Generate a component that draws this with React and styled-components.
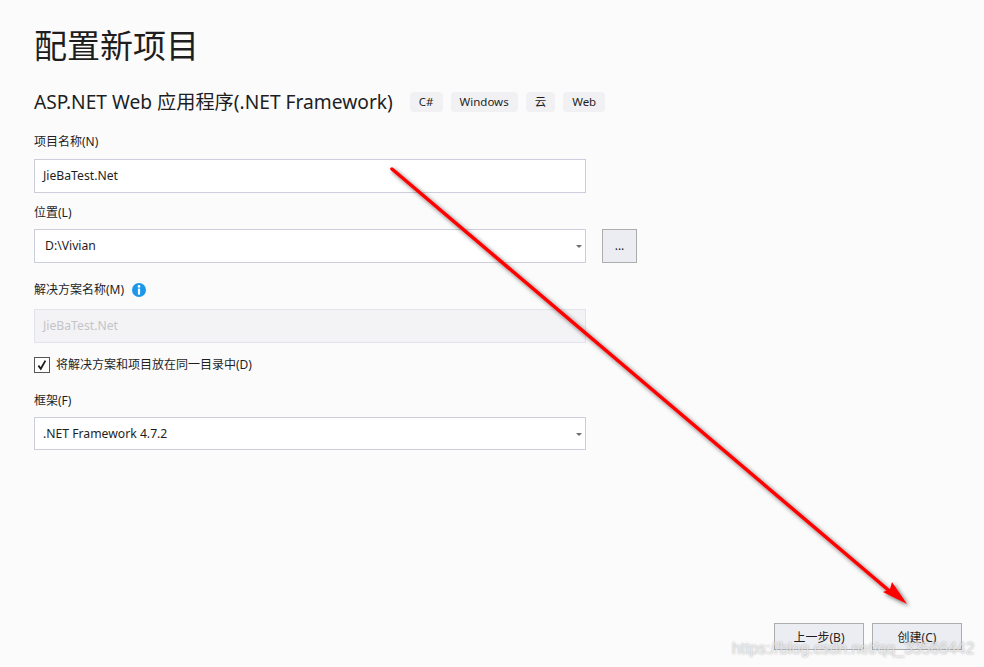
import React from "react";
import styled, { createGlobalStyle } from "styled-components";

const FONT = `"Noto Sans", "Noto Sans CJK SC", sans-serif`;

const Global = createGlobalStyle`
  html, body { margin: 0; padding: 0; background: #fbfbfc; }
  * { box-sizing: border-box; }
`;

const Page = styled.div`
  position: relative;
  width: 984px;
  height: 667px;
  overflow: hidden;
  padding: 22px 22px 0 34px;
  display: flex;
  flex-direction: column;
  background: #fbfbfc;
  color: #1e1e1e;
  font-family: ${FONT};
`;
const Title = styled.h1`
  margin: 0;
  height: 48px;
  font-size: 33px;
  line-height: 48px;
  font-weight: 400;
`;
const TemplateRow = styled.div`
  display: flex;
  align-items: center;
  margin-top: 22px;
  height: 20px;
`;
const TemplateName = styled.h2`
  margin: 0;
  font-size: 19.2px;
  line-height: 20px;
  font-weight: 400;
  white-space: nowrap;
`;
const Tags = styled.div`
  display: flex;
  gap: 8px;
  margin-left: 17px;
`;
const Tag = styled.span`
  height: 20px;
  padding: 0 9px;
  border-radius: 4px;
  background: #f1f1f3;
  font-size: 11.5px;
  line-height: 20px;
`;
const Label = styled.div`
  display: flex;
  align-items: center;
  gap: 8px;
  height: 18px;
  margin-top: ${(p) => p.$top}px;
  font-size: 12px;
  line-height: 18px;
`;
const FieldRow = styled.div`
  display: flex;
  gap: 16px;
  margin-top: ${(p) => p.$top}px;
`;
const Field = styled.div`
  position: relative;
  width: 552px;
  height: ${(p) => p.$h || 34}px;
  padding-left: ${(p) => p.$indent || 8}px;
  border: 1px solid ${(p) => (p.$disabled ? "#e3e3ea" : "#cccedb")};
  background: ${(p) => (p.$disabled ? "#f3f3f6" : "#fff")};
  color: ${(p) => (p.$disabled ? "#c4c4c8" : "#1e1e1e")};
  font-size: 12.2px;
  line-height: ${(p) => (p.$h || 34) - 2}px;
`;
const Caret = styled.span`
  position: absolute;
  right: 3px;
  top: 50%;
  margin-top: -1px;
  border-left: 3px solid transparent;
  border-right: 3px solid transparent;
  border-top: 3px solid #6d6d70;
`;
const BrowseButton = styled.button`
  width: 35px;
  height: 34px;
  padding: 0 0 2px;
  border: 1px solid #adadad;
  background: #ecedf2;
  color: #1e1e1e;
  font-family: ${FONT};
  font-size: 12px;
`;
const CheckRow = styled.label`
  display: flex;
  align-items: center;
  gap: 6px;
  height: 17px;
  margin-top: 13px;
  font-size: 12px;
  line-height: 17px;
`;
const CheckBox = styled.span`
  display: flex;
  align-items: center;
  justify-content: center;
  width: 16px;
  height: 16px;
  border: 1px solid #555;
  background: #fff;
`;
const Footer = styled.div`
  display: flex;
  justify-content: flex-end;
  gap: 8px;
  margin-top: auto;
  margin-bottom: 17px;
`;
const FooterButton = styled.button`
  width: 90px;
  height: 27px;
  padding: 0;
  border: 1px solid #adadad;
  background: #ecedf2;
  color: #1e1e1e;
  font-family: ${FONT};
  font-size: 12px;
`;
const ArrowLayer = styled.svg`
  position: absolute;
  inset: 0;
  pointer-events: none;
`;
const Watermark = styled.div`
  position: absolute;
  left: 732px;
  top: 639px;
  font-family: "Liberation Sans", sans-serif;
  font-size: 15.8px;
  line-height: 20px;
  color: rgba(255, 255, 255, 0.6);
  text-shadow: 0 0 2px rgba(120, 120, 120, 0.65);
  white-space: nowrap;
`;

const Info = () => (
  <svg width="14" height="14" viewBox="0 0 14 14">
    <circle cx="7" cy="7" r="7" fill="#1c97ea" />
    <rect x="5.9" y="5.6" width="2.2" height="6" fill="#fff" />
    <circle cx="7" cy="3.4" r="1.3" fill="#fff" />
  </svg>
);

const Check = () => (
  <svg width="12" height="12" viewBox="0 0 12 12">
    <path d="M2.4 6.6 L4.8 9.8 L9.4 1.6" fill="none" stroke="#1e1e1e" strokeWidth="1.8" />
  </svg>
);

export default function App() {
  return (
    <>
      <Global />
      <Page>
        <Title>配置新项目</Title>
        <TemplateRow>
          <TemplateName>ASP.NET Web 应用程序(.NET Framework)</TemplateName>
          <Tags>
            <Tag>C#</Tag>
            <Tag>Windows</Tag>
            <Tag>云</Tag>
            <Tag>Web</Tag>
          </Tags>
        </TemplateRow>
        <Label $top={21}>项目名称(N)</Label>
        <FieldRow $top={8}>
          <Field>JieBaTest.Net</Field>
        </FieldRow>
        <Label $top={11}>位置(L)</Label>
        <FieldRow $top={7}>
          <Field $indent={10}>
            D:\Vivian
            <Caret />
          </Field>
          <BrowseButton>...</BrowseButton>
        </FieldRow>
        <Label $top={18}>
          解决方案名称(M)
          <Info />
        </Label>
        <FieldRow $top={10}>
          <Field $disabled>JieBaTest.Net</Field>
        </FieldRow>
        <CheckRow>
          <CheckBox>
            <Check />
          </CheckBox>
          将解决方案和项目放在同一目录中(D)
        </CheckRow>
        <Label $top={19}>框架(F)</Label>
        <FieldRow $top={7}>
          <Field $h={33}>
            .NET Framework 4.7.2
            <Caret />
          </Field>
        </FieldRow>
        <Footer>
          <FooterButton>上一步(B)</FooterButton>
          <FooterButton>创建(C)</FooterButton>
        </Footer>
        <ArrowLayer width="984" height="667" viewBox="0 0 984 667">
          <defs>
            <filter id="arrowShadow" x="-10%" y="-10%" width="120%" height="120%">
              <feDropShadow dx="2" dy="2" stdDeviation="2" floodColor="#000" floodOpacity="0.6" />
            </filter>
          </defs>
          <g filter="url(#arrowShadow)">
            <path d="M392 169 L893 594" fill="none" stroke="#f00" strokeWidth="3.5" strokeLinecap="round" />
            <path d="M907 604 L883 592 L890 589 L892 582 Z" fill="#f00" />
          </g>
        </ArrowLayer>
        <Watermark>https://blog.csdn.net/qq_33566442</Watermark>
      </Page>
    </>
  );
}
